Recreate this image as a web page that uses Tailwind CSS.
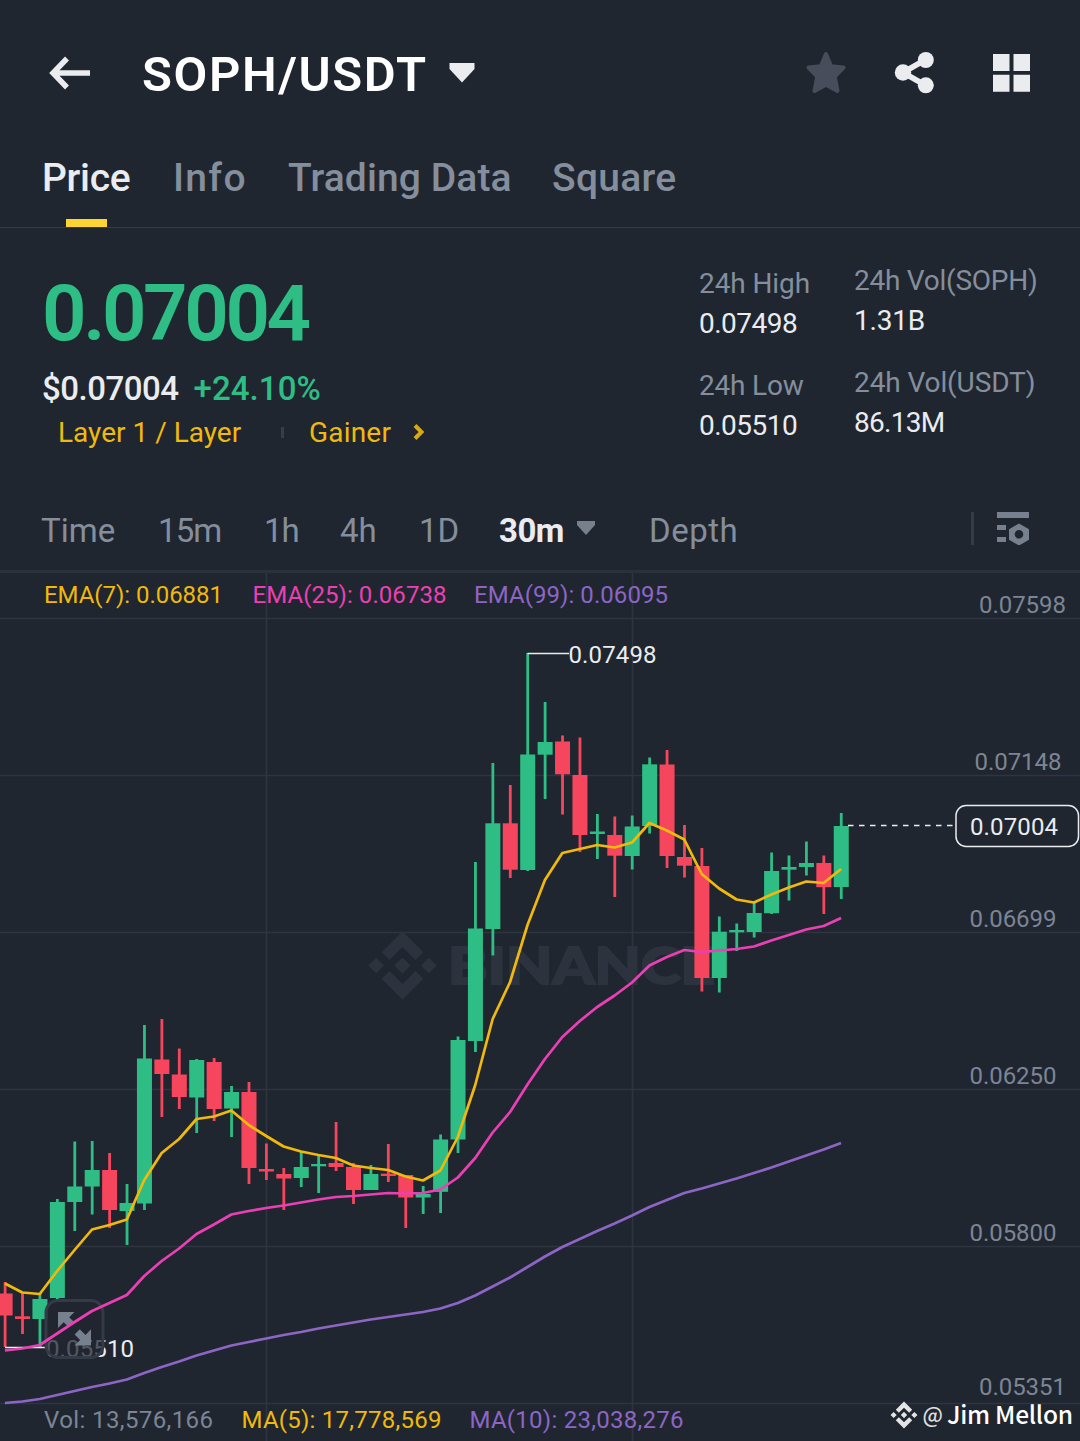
<!DOCTYPE html>
<html lang="en">
<head>
  <meta charset="UTF-8">
  <meta name="viewport" content="width=device-width,initial-scale=1.0">
  <title>SOPH/USDT</title>
  <script src="https://cdn.jsdelivr.net/npm/@tailwindcss/browser@4"></script>
</head>
<body class="bg-[#202630] font-[Roboto,sans-serif] text-[#eaecef] w-[1080px] h-[1441px] overflow-hidden">

  <!-- Header -->
  <header class="h-[145px] flex items-center pl-[49px] pr-[50px]">
    <svg class="w-[42px] h-[34px]" viewBox="0 0 42 34" fill="none" stroke="#eaecef" stroke-width="5.5"><path d="M41 17H4M18 2.500L4 17l14 14.500"/></svg>
    <h1 class="ml-[51px] mt-[5px] text-[49px] leading-[60px] font-semibold tracking-[1.6px] text-white whitespace-nowrap w-[290px]">SOPH/USDT</h1>
    <svg class="ml-[17px] w-[26px] h-[21px]" viewBox="0 0 26 21" fill="#eaecef"><path d="M.5 1h25v6L13 20.500.5 7z"/></svg>
    <svg class="ml-auto w-[42px] h-[43px]" viewBox="0 0 42 43" fill="#474d5a" stroke="#474d5a" stroke-width="4" stroke-linejoin="round"><path d="M21 3l5.200 12.300L38.500 16.500 29.700 25.500 32.500 40 21 33.700 9.500 40l2.800-14.500L3.500 16.500l12.300-1.200z"/></svg>
    <svg class="ml-[47px] w-[40px] h-[43px]" viewBox="0 0 40 43" fill="#eaecef"><path d="M9 21.500L31 9M9 21.500L31 34" stroke="#eaecef" stroke-width="5.500"/><circle cx="9" cy="21.500" r="8.200"/><circle cx="31.800" cy="9" r="8"/><circle cx="31.800" cy="34.300" r="8"/></svg>
    <svg class="ml-[58px] w-[38px] h-[38px]" viewBox="0 0 38 38" fill="#eaecef"><path d="M1 0h16.500v17H1zM21.500 0H38v17H21.500zM1 20.700h16.500v17H1zM21.500 20.700H38v17H21.500z"/></svg>
  </header>

  <!-- Tabs -->
  <nav class="h-[83px] border-b border-[#333b47] pl-[42px] flex text-[39px] leading-[66px] font-medium text-[#848e9c] whitespace-nowrap">
    <a class="relative w-[131px] h-full text-[#eaecef] tracking-[-0.3px]">Price<span class="absolute left-[24px] bottom-0 w-[41px] h-[8px] bg-[#fcd535]"></span></a>
    <a class="w-[115px] tracking-[1.3px]">Info</a>
    <a class="w-[264px] tracking-[0.100px]">Trading Data</a>
    <a class="tracking-[0.300px]">Square</a>
  </nav>

  <!-- Price and 24h stats -->
  <section class="h-[259px] flex whitespace-nowrap">
    <div class="w-[699px] pl-[42px] pt-[41px]">
      <p class="text-[78px] leading-[90px] font-semibold text-[#2ebd85] tracking-[-3.4px]">0.07004</p>
      <p class="flex gap-[15px] mt-[8px] text-[33px] leading-[44px] font-medium"><span class="tracking-[-0.5px]">$0.07004</span><span class="text-[#2ebd85] tracking-[0.1px]">+24.10%</span></p>
      <p class="flex items-center pl-[16px] pt-px text-[28px] leading-[42px] text-[#f0b90b]">
        <span class="w-[223px]">Layer 1 / Layer</span>
        <span class="w-[3px] h-[11px] mb-[2px] bg-[#373d4a]"></span>
        <span class="ml-[25px] w-[104px] tracking-[0.2px]">Gainer</span>
        <svg class="w-[12px] h-[16px] mb-[2px]" viewBox="0 0 12 16" fill="none" stroke="#d9a914" stroke-width="4"><path d="M2 1.500L8.500 8 2 14.500"/></svg>
      </p>
    </div>
    <div class="w-[155px] pt-[36px] text-[28px] leading-[40px]">
      <p class="text-[#848e9c] tracking-[-0.1px]">24h High</p>
      <p class="tracking-[-0.5px]">0.07498</p>
      <p class="mt-[22px] text-[#848e9c] tracking-[-0.2px]">24h Low</p>
      <p class="tracking-[-0.5px]">0.05510</p>
    </div>
    <div class="pt-[33px] text-[28px] leading-[40px]">
      <p class="text-[#848e9c] tracking-[-0.25px]">24h Vol(SOPH)</p>
      <p class="tracking-[-0.2px]">1.31B</p>
      <p class="mt-[22px] text-[#848e9c] tracking-[-0.1px]">24h Vol(USDT)</p>
      <p class="tracking-[-0.7px]">86.13M</p>
    </div>
  </section>

  <!-- Intervals -->
  <nav class="h-[86px] border-b-3 border-[#2b313c] flex items-center pl-[41px] pt-[5px] text-[33px] text-[#848e9c] whitespace-nowrap">
    <a class="w-[117px]">Time</a>
    <a class="w-[106px] tracking-[-0.9px]">15m</a>
    <a class="w-[76px] tracking-[-1px]">1h</a>
    <a class="w-[79px]">4h</a>
    <a class="w-[80px]">1D</a>
    <a class="w-[78px] font-bold text-[#eaecef] tracking-[-0.5px]">30m</a>
    <svg class="w-[18px] h-[14px] mb-[7px]" viewBox="0 0 18 14" fill="#76808e"><path d="M0 0h18v4L9 14 0 4z"/></svg>
    <a class="ml-[54px] tracking-[0.5px]">Depth</a>
    <span class="ml-auto w-[3px] h-[33px] bg-[#333b47] mb-[5px]"></span>
    <svg class="ml-[23px] mr-[50px] mb-[5px] w-[33px] h-[33px]" viewBox="0 0 33 33" fill="#76808e"><path d="M0 0h32v6H0zM0 13h9v5H0zM0 25h9v5H0z"/><path fill-rule="evenodd" d="M22 11.500l10 5.700v10.600l-10 5.700-10-5.700V17.200zM22 18a4.300 4.300 0 1 0 0 8.600a4.300 4.300 0 1 0 0-8.600z"/></svg>
  </nav>

  <!-- Chart -->
  <svg class="block w-[1080px] h-[868px]" viewBox="0 573 1080 868" font-size="24">
    <path stroke="#2f3540" stroke-width="1.700" d="M0 618.500h1080M0 775.500h1080M0 932.500h1080M0 1089.500h1080M0 1246.500h1080M0 1403.500h1080M266.500 573v868M632.500 573v868"/>

    <g fill="#2d333e">
      <path d="M402.500 931.500l20.800 20.800-7.800 7.700-13-13-13 13-7.800-7.700zM402.500 999.500l20.800-20.800-7.800-7.700-13 13-13-13-7.800 7.700zM402.500 957.500l8 8-8 8-8-8zM376.200 957.700l7.800 7.800-7.800 7.800-7.800-7.800zM428.800 957.700l7.800 7.800-7.800 7.800-7.800-7.800z"/>
      <text x="448" y="983.500" font-family="Lato, sans-serif" font-weight="900" font-size="52" textLength="267" lengthAdjust="spacingAndGlyphs" stroke="#2d333e" stroke-width="2">BINANCE</text>
    </g>

    <g id="candles"></g>

    <path d="M527.500 653.500H569M5 1347.500H45" stroke="#eaecef" stroke-width="1.500"/>
    <g fill="#eaecef">
      <text x="568.500" y="663" textLength="88">0.07498</text>
      <text x="46" y="1357" textLength="88">0.05510</text>
    </g>

    <!-- Fullscreen button -->
    <rect x="46" y="1300.500" width="57" height="57" rx="12" fill="#202630" fill-opacity=".75" stroke="#343a46" stroke-width="3"/>
    <path fill="#76808e" d="M58 1312h16.500l-5.300 5.300 4.300 4.300-5.200 5.200-4.600-4.600-5.700 5.800zM91 1345.500H74.500l5.600-5.500-5.500-5.500 5.200-5.200 5.700 5.600 5.500-5.600z"/>

    <g id="lines" fill="none" stroke-width="2.700" stroke-linejoin="round"></g>

    <!-- Last price -->
    <path d="M848 825.500H956" stroke="#eaecef" stroke-width="1.500" stroke-dasharray="5.500 5.500"/>
    <rect x="956" y="805.500" width="122.500" height="41" rx="10" fill="#202630" stroke="#eaecef" stroke-width="1.500"/>
    <text x="970" y="835" fill="#eaecef" textLength="88">0.07004</text>

    <text x="44" y="603" fill="#f0b90b" textLength="179">EMA(7): 0.06881</text>
    <text x="252.500" y="603" fill="#eb40b5" textLength="194">EMA(25): 0.06738</text>
    <text x="474" y="603" fill="#8d65c5" textLength="194">EMA(99): 0.06095</text>

    <g fill="#7c8595">
      <text x="979" y="613" textLength="87">0.07598</text>
      <text x="974.500" y="770" textLength="87">0.07148</text>
      <text x="969.500" y="927" textLength="87">0.06699</text>
      <text x="969.500" y="1084" textLength="87">0.06250</text>
      <text x="969.500" y="1241" textLength="87">0.05800</text>
      <text x="979" y="1395" textLength="87">0.05351</text>
    </g>

    <text x="44" y="1428" fill="#7c8595" textLength="169">Vol: 13,576,166</text>
    <text x="241.500" y="1428" fill="#f0b90b" textLength="200">MA(5): 17,778,569</text>
    <text x="469.500" y="1428" fill="#8d65c5" textLength="214">MA(10): 23,038,276</text>

    <!-- Author -->
    <g transform="translate(904 1415) scale(.395) translate(-402.500 -965.500)" fill="#e3e4e6">
      <path d="M402.500 931.500l20.800 20.800-7.800 7.700-13-13-13 13-7.800-7.700zM402.500 999.500l20.800-20.800-7.800-7.700-13 13-13-13-7.800 7.700zM402.500 957.500l8 8-8 8-8-8zM376.200 957.700l7.800 7.800-7.800 7.800-7.800-7.800zM428.800 957.700l7.800 7.800-7.800 7.800-7.800-7.800z"/>
    </g>
    <g font-family="'Noto Sans CJK SC', sans-serif" font-weight="500">
      <text x="922.500" y="1423" font-size="21" fill="#dddee0">@</text>
      <text x="947" y="1424" font-size="24.500" fill="#fff" textLength="126">Jim Mellon</text>
    </g>
  </svg>

<script>
  const UP = '#2ebd85';
  const DOWN = '#f6465d';
  const x = i => 4.9 + i * 17.42;

  // [up, high, low, body top, body bottom]
  const candles = [
    [0,1282,1347,1293.5,1315.5],[0,1293,1334,1316.3,1319],[1,1293,1347,1299,1319],[1,1199,1302,1202,1298],
    [1,1141.5,1231,1186.5,1202],[1,1141,1214.5,1170,1186.5],[0,1153,1228,1170,1210],[1,1184,1245,1203,1211],
    [1,1025,1210,1058.5,1203.5],[0,1019,1117,1059.5,1074],[0,1048.5,1109,1074.5,1097],[1,1059,1133,1060,1097.5],
    [0,1058,1121,1062,1109],[1,1086,1137,1092,1108.5],[0,1082,1184,1092,1168],[0,1143.5,1180,1169,1171.5],
    [0,1168,1210,1174,1178.5],[1,1152,1187,1167,1178],[1,1155,1193,1164,1166.3],[0,1122,1171,1163,1167],
    [0,1163,1204,1167,1190],[1,1165,1190,1174,1190],[0,1144,1182,1173.7,1176],[0,1175,1228,1175,1197.5],
    [1,1186,1214,1194,1197.5],[1,1134.5,1213,1139.5,1191.8],[1,1036.5,1153,1040,1139.5],[1,862,1052,928.5,1041],
    [1,763,955.5,823.3,929],[0,785,878,823.3,869.7],[1,653,871,754.5,870],[1,702,799,742,754.7],
    [0,735.5,814.5,741.5,774.3],[0,737.5,852,775,835],[1,814,859,831.5,834],[0,816.5,897,835,855.7],
    [1,815.5,869.5,826.5,856],[1,757.5,833.5,764.3,826],[0,750,868,764.5,856],[0,825,877.5,857,865.7],
    [0,848,991.5,866,978],[1,916.5,992.5,931.7,978],[1,923.5,951,930,932.3],[1,903,937.5,913,932],
    [1,852.5,914,871,913.2],[1,855.5,900.5,867,869.7],[1,841.5,875.5,863,867],[0,855.5,914,863,887.2],
    [1,813,899,826,887]
  ];

  document.getElementById('candles').innerHTML = candles.map(([up, high, low, top, bottom], i) => {
    const color = up ? UP : DOWN;
    return `<rect x="${x(i) - 1.2}" y="${high}" width="2.8" height="${low - high}" fill="${color}"/>
      <rect x="${x(i) - 7.3}" y="${top}" width="15" height="${bottom - top}" fill="${color}"/>`;
  }).join('');

  const averages = [
    { color: '#8d65c5', values: [1403,1401.5,1399,1395,1391,1387,1383.5,1379.5,1373,1367,1361.5,1355.5,1350.5,1345.5,1342,1338.5,1335,1332,1328.5,1325.5,1322.5,1319.5,1317,1314.5,1312,1308.5,1303,1295.5,1286.5,1277.5,1267,1256.5,1247,1239,1231,1223.5,1215.5,1207,1200,1193,1188.5,1183.5,1178.5,1173,1167.5,1161.5,1155.5,1149.5,1143] },
    { color: '#eb40b5', values: [1350.5,1348.5,1345,1333.5,1322,1311,1303,1295,1276,1261,1248.5,1234,1224.5,1214.5,1211,1208,1205.5,1202.5,1199.5,1197,1196,1194.5,1193,1193.5,1193,1189.5,1177.5,1158,1132.5,1112,1084.5,1059,1037,1021,1007,995.5,982.5,965.5,957,950,952,950.5,949,946.5,940.5,935,929.5,926,918] },
    { color: '#f0b90b', values: [1283.5,1292.5,1294,1271,1250,1229.5,1225,1219.5,1180,1153,1139,1119,1116.5,1110.5,1125,1136,1146.5,1151.5,1155,1158,1165.5,1168,1170,1176.5,1180.5,1170.5,1137,1085,1019,982,925,880,853,849,845,847.5,842.5,823,830.5,839.5,874,888.5,899.5,902.5,894.5,887.5,881.5,883,869] }
  ];

  document.getElementById('lines').innerHTML = averages.map(a =>
    `<polyline stroke="${a.color}" points="${a.values.map((v, i) => x(i) + ',' + v).join(' ')}"/>`
  ).join('');
</script>
</body>
</html>
